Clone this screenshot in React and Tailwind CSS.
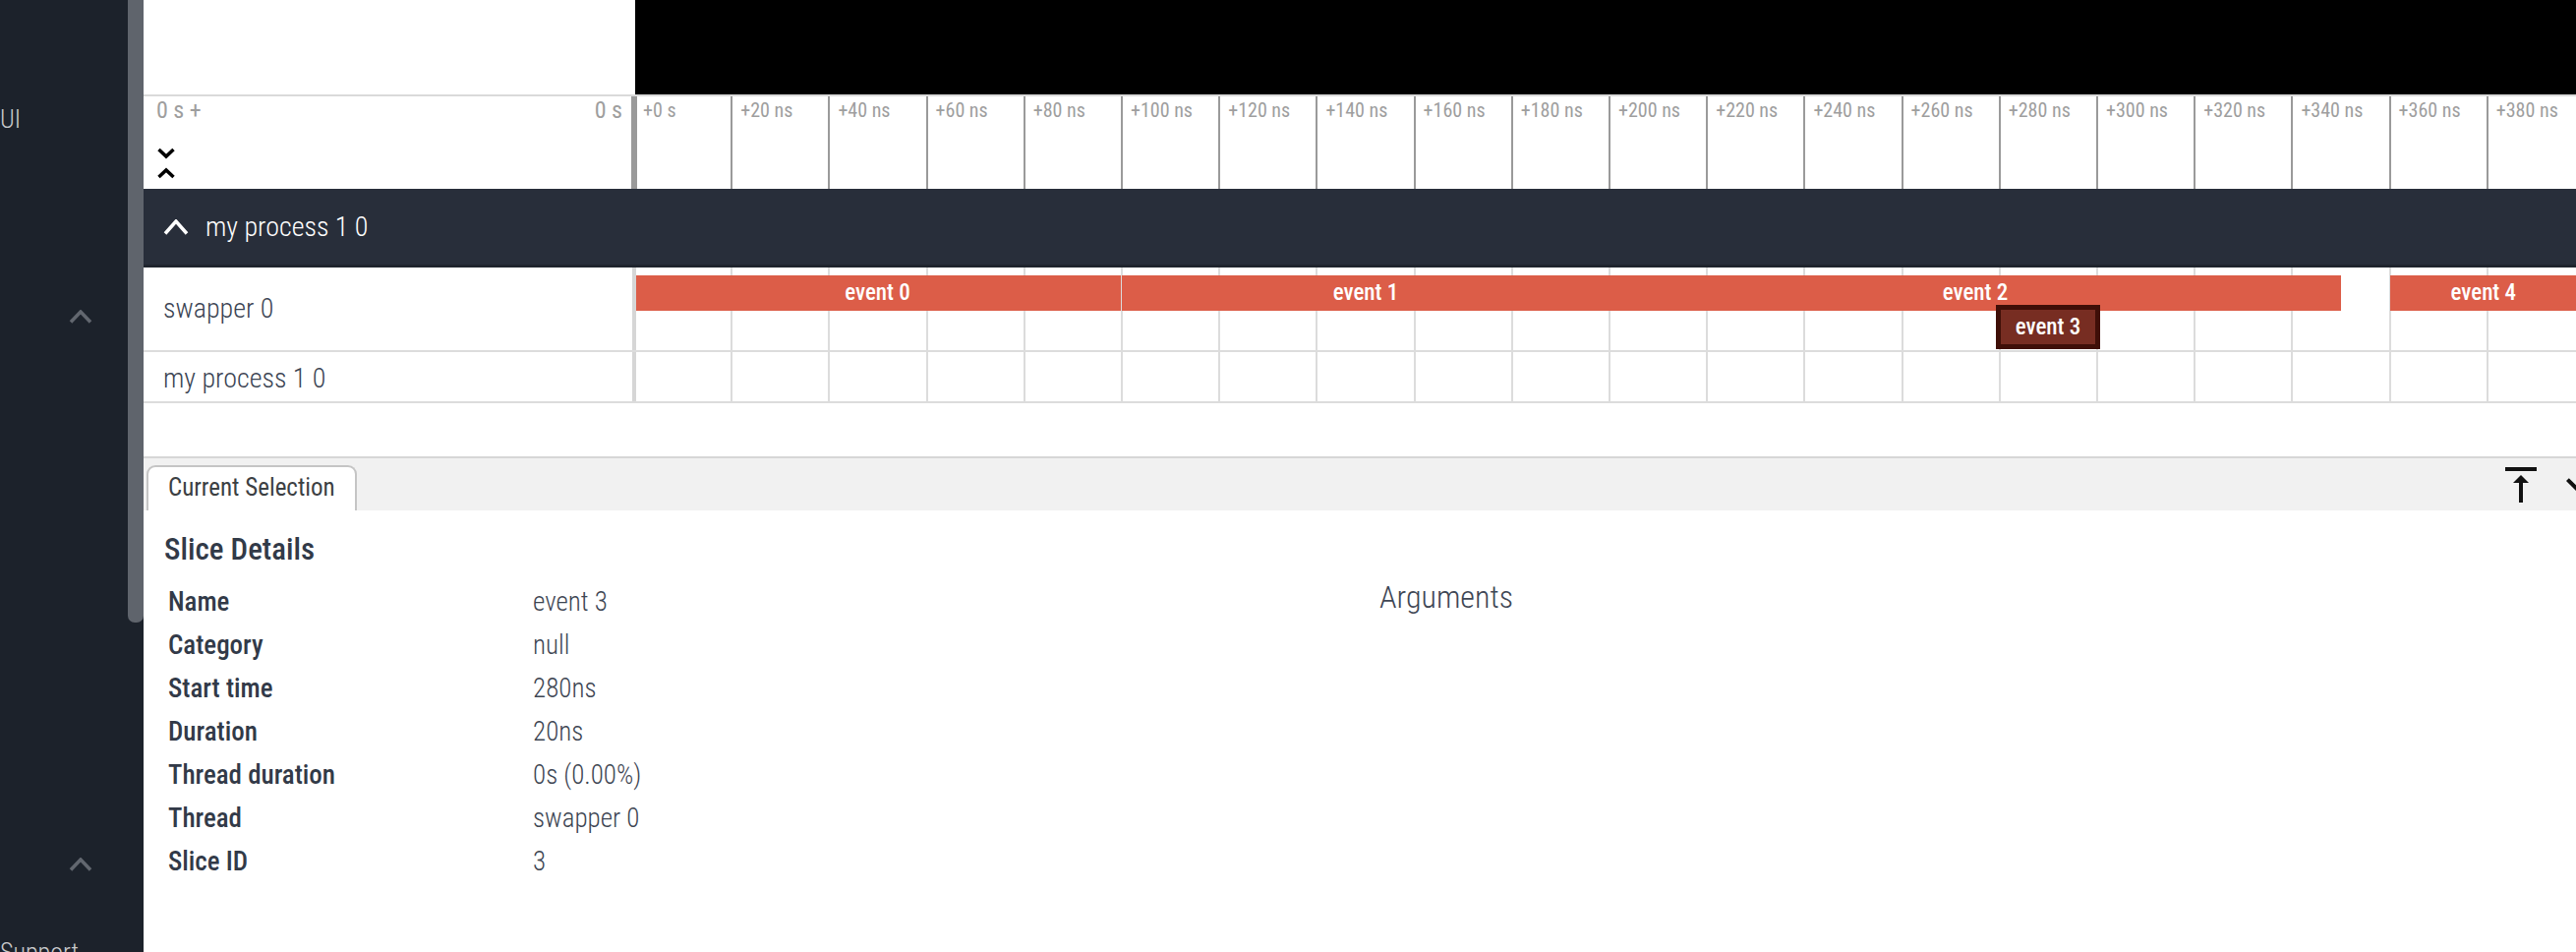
import React from 'react';

const X0 = 645;
const NS = 4.96;

const ticks = Array.from({ length: 20 }, (_, k) => ({
  k,
  x: X0 + k * 99.2,
  label: k === 0 ? '+0 s' : `+${k * 20} ns`,
}));

const slices = [
  { name: 'event 0', start: 0, end: 99.8 },
  { name: 'event 1', start: 100, end: 200 },
  { name: 'event 2', start: 200, end: 350 },
  { name: 'event 4', start: 360, end: 398.4 },
];

const FONT = "font-['Roboto_Condensed','Roboto',sans-serif] font-stretch-[85%]";

function GridLines({ origin, color }) {
  return ticks
    .filter((t) => t.k > 0)
    .map((t) => (
      <div
        key={t.k}
        className={`absolute top-0 bottom-0 w-[2px] ${color}`}
        style={{ left: t.x - origin - 1 }}
      />
    ));
}

function Chevron({ className, up = true, stroke = 'currentColor', w = 24, h = 14, sw = 3.5 }) {
  const pts = up
    ? `2,${h - 1.5} ${w / 2},2 ${w - 2},${h - 1.5}`
    : `2,1.5 ${w / 2},${h - 2} ${w - 2},1.5`;
  return (
    <svg className={`shrink-0 ${className}`} width={w} height={h} viewBox={`0 0 ${w} ${h}`}>
      <polyline points={pts} fill="none" stroke={stroke} strokeWidth={sw} />
    </svg>
  );
}

function Sidebar() {
  return (
    <div className="flex w-[146px] shrink-0 bg-[#1c222b]">
      <div className="flex w-[130px] flex-col overflow-hidden">
        <div className={`mt-[105px] h-[32px] shrink-0 text-[26px] leading-[32px] font-light text-[#c9cacc] ${FONT}`}>UI</div>
        <Chevron className="ml-[70px] mt-[178px] text-[#62676f]" />
        <Chevron className="ml-[70px] mt-[543px] text-[#62676f]" />
        <div className={`mt-[66px] h-[32px] shrink-0 text-[26px] leading-[32px] font-light text-[#c9cacc] ${FONT}`}>Support</div>
      </div>
      <div className="w-[16px] shrink-0">
        <div className="h-[633px] rounded-b-[7px] bg-[#5f646c]" />
      </div>
    </div>
  );
}

function AxisRow() {
  const origin = 648;
  return (
    <div className="flex h-[94px] shrink-0 bg-white">
      <div className={`relative flex w-[496px] flex-col pl-[13px] pr-[9px] ${FONT}`}>
        <div className="flex justify-between text-[24px] leading-[28px] text-[#9e9e9e]">
          <span>0 s +</span>
          <span>0 s</span>
        </div>
        <svg className="mt-[22px] shrink-0 text-black" width="20" height="36" viewBox="0 0 20 36">
          <polyline points="2.5,4 10,11 17.5,4" fill="none" stroke="currentColor" strokeWidth="3.5" />
          <polyline points="2.5,32 10,25 17.5,32" fill="none" stroke="currentColor" strokeWidth="3.5" />
        </svg>
      </div>
      <div className="w-[6px] bg-[#9a9a9a]" />
      <div className="relative flex-1 overflow-hidden">
        <GridLines origin={origin} color="bg-[#9a9a9a]" />
        {ticks.map((t) => (
          <span
            key={t.k}
            className={`absolute top-[2px] whitespace-nowrap text-[20px] leading-[24px] text-[#9e9e9e] ${FONT}`}
            style={{ left: t.x - origin + 9 }}
          >
            {t.label}
          </span>
        ))}
      </div>
    </div>
  );
}

function ProcessHeader() {
  return (
    <div className="flex h-[80px] shrink-0 items-center border-b-[3px] border-[#20252e] bg-[#282e3a] pl-[20px]">
      <Chevron className="text-white" w={26} h={16} sw={3.5} />
      <span className={`ml-[17px] text-[28px] leading-[34px] font-light text-white ${FONT}`}>my process 1 0</span>
    </div>
  );
}

function TrackRow({ label, heightClass, extraPad = '', children }) {
  const origin = 647;
  return (
    <div className={`flex shrink-0 border-b-2 border-[#dcdcdc] bg-white ${heightClass}`}>
      <div className={`flex w-[497px] items-center pl-[20px] ${extraPad}`}>
        <span className={`text-[28px] leading-[34px] font-light text-[#3b4453] ${FONT}`}>{label}</span>
      </div>
      <div className="w-[4px] bg-[#d6d6d6]" />
      <div className="relative flex-1 overflow-hidden">
        <GridLines origin={origin} color="bg-[#dcdcdc]" />
        {children}
      </div>
    </div>
  );
}

function Slices() {
  const origin = 647;
  return (
    <>
      {slices.map((s) => (
        <div
          key={s.name}
          className={`absolute top-[8px] flex h-[36px] items-center justify-center bg-[#dc5d48] text-[23px] leading-[28px] font-medium text-white ${FONT}`}
          style={{ left: X0 + s.start * NS - origin, width: (s.end - s.start) * NS }}
        >
          {s.name}
        </div>
      ))}
      <div
        className={`absolute top-[38px] flex h-[45px] items-center justify-center border-[5px] border-[#3f0f08] bg-[#772d22] text-[23px] leading-[28px] font-medium text-white ${FONT}`}
        style={{ left: 2030 - origin, width: 106 }}
      >
        event 3
      </div>
    </>
  );
}

const details = [
  ['Name', 'event 3'],
  ['Category', 'null'],
  ['Start time', '280ns'],
  ['Duration', '20ns'],
  ['Thread duration', '0s (0.00%)'],
  ['Thread', 'swapper 0'],
  ['Slice ID', '3'],
];

function BottomPanel() {
  return (
    <div className="flex flex-1 flex-col">
      <div className="flex h-[55px] shrink-0 items-end overflow-hidden border-t-2 border-[#d6d6d6] bg-[#f1f1f1] pl-[3px]">
        <div className={`flex h-[46px] items-start rounded-t-[9px] border-2 border-b-0 border-[#c5c5c5] bg-white px-[20px] pt-[6px] text-[25px] leading-[30px] text-[#3c4043] ${FONT}`}>
          Current Selection
        </div>
        <div className="flex-1" />
        <div className="mr-[-26px] flex h-full items-center gap-[10px]">
          <svg width="48" height="48" viewBox="0 0 24 24" fill="#111">
            <path d="M8 11h3v10h2V11h3l-4-4-4 4zM4 3v2h16V3H4z" />
          </svg>
          <svg width="48" height="48" viewBox="0 0 24 24" fill="#111">
            <path d="M7.41 8.59L12 13.17l4.59-4.58L18 10l-6 6-6-6 1.41-1.41z" />
          </svg>
        </div>
      </div>
      <div className={`grid flex-1 grid-cols-2 bg-white px-[21px] ${FONT}`}>
        <div className="pt-[22px]">
          <h2 className="text-[31px] leading-[36px] font-medium text-[#323a48]">Slice Details</h2>
          <div className="mt-[13px] grid grid-cols-[371px_auto] pl-[4px]">
            {details.map(([k, v]) => (
              <React.Fragment key={k}>
                <div className="text-[27px] leading-[44px] font-medium text-[#323a48]">{k}</div>
                <div className="text-[27px] leading-[44px] font-light text-[#3d4552]">{v}</div>
              </React.Fragment>
            ))}
          </div>
        </div>
        <div className="pl-[20px] pt-[68px]">
          <h2 className="text-[32px] leading-[40px] font-light text-[#3e4654]">Arguments</h2>
        </div>
      </div>
    </div>
  );
}

export default function App() {
  return (
    <div className="flex h-[968px] w-[2620px] overflow-hidden bg-white">
      <Sidebar />
      <div className="flex min-w-0 flex-1 flex-col">
        <div className="flex h-[96px] shrink-0">
          <div className="w-[500px] bg-white" />
          <div className="flex-1 bg-black" />
        </div>
        <div className="h-[2px] shrink-0 bg-[#dadada]" />
        <AxisRow />
        <ProcessHeader />
        <TrackRow label="swapper 0" heightClass="h-[86px]">
          <Slices />
        </TrackRow>
        <TrackRow label="my process 1 0" heightClass="h-[52px]" extraPad="pt-[4px]" />
        <div className="h-[54px] shrink-0" />
        <BottomPanel />
      </div>
    </div>
  );
}
